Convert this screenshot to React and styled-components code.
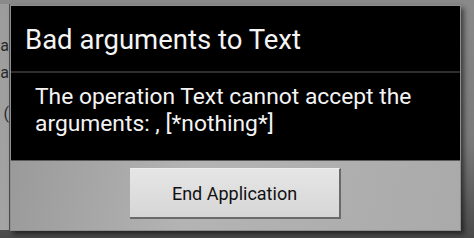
import React from 'react';
import styled, { createGlobalStyle } from 'styled-components';

const GlobalStyle = createGlobalStyle`
  html, body {
    margin: 0;
    padding: 0;
    width: 474px;
    height: 238px;
    overflow: hidden;
    background: #7c7c7c;
    font-family: Roboto, "Noto Sans", sans-serif;
  }
`;

const App = () => {
  return (
    <Screen>
      <GlobalStyle />
      <Behind>
        <BehindLine top={34}>Data</BehindLine>
        <BehindLine top={11}>Data</BehindLine>
        <BehindLine top={25}>(</BehindLine>
      </Behind>
      <Dialog>
        <TitleBar>
          <Title>Bad arguments to Text</Title>
        </TitleBar>
        <Divider />
        <Message>
          The operation Text cannot accept the arguments: , [*nothing*]
        </Message>
        <Footer>
          <Button>End Application</Button>
        </Footer>
      </Dialog>
    </Screen>
  );
};

export default App;

const Screen = styled.div`
  width: 474px;
  height: 238px;
  display: flex;
  background: linear-gradient(180deg, #8a8a8a 0%, #7a7a7a 60%, #4a4a4a 100%);
`;

const Behind = styled.div`
  width: 9px;
  margin-top: 4px;
  height: 226px;
  background: linear-gradient(180deg, #9c9c9c 0%, #a4a4a4 100%);
  border-right: 1px solid #4f4f4f;
  overflow: hidden;
  display: flex;
  flex-direction: column;
  align-items: flex-end;
`;

const BehindLine = styled.div`
  margin-top: ${(p) => p.top}px;
  font-size: 16px;
  line-height: 16px;
  color: #2a2a2a;
  white-space: nowrap;
`;

const Dialog = styled.div`
  margin-top: 5px;
  width: 451px;
  height: 226px;
  box-sizing: border-box;
  border: 1px solid #8e8e8e;
  box-shadow: 3px 3px 5px rgba(0, 0, 0, 0.55);
  display: flex;
  flex-direction: column;
  background: #000;
`;

const TitleBar = styled.div`
  height: 65px;
  display: flex;
  align-items: center;
  padding-left: 14px;
  padding-top: 2px;
  box-sizing: border-box;
`;

const Title = styled.div`
  color: #f4f4f4;
  font-size: 27.5px;
`;

const Divider = styled.div`
  height: 2px;
  background: #2e2e2e;
`;

const Message = styled.div`
  height: 87px;
  box-sizing: border-box;
  padding: 10px 16px 0 24px;
  color: #f4f4f4;
  font-size: 22.8px;
  line-height: 27px;
`;

const Footer = styled.div`
  flex: 1;
  display: flex;
  justify-content: center;
  align-items: flex-start;
  padding-top: 7px;
  border-top: 1px solid #5a5a5a;
  background: linear-gradient(100deg, #9a9a9a 0%, #b4b4b4 40%, #aaaaaa 100%);
`;

const Button = styled.button`
  width: 211px;
  height: 51px;
  border: none;
  border-right: 2px solid #6a6a6a;
  border-bottom: 2px solid #6a6a6a;
  border-top: 1px solid #eeeeee;
  background: linear-gradient(180deg, #e6e6e6 0%, #d6d6d6 100%);
  color: #111;
  font-family: Roboto, "Noto Sans", sans-serif;
  font-size: 18px;
  padding: 0;
`;
